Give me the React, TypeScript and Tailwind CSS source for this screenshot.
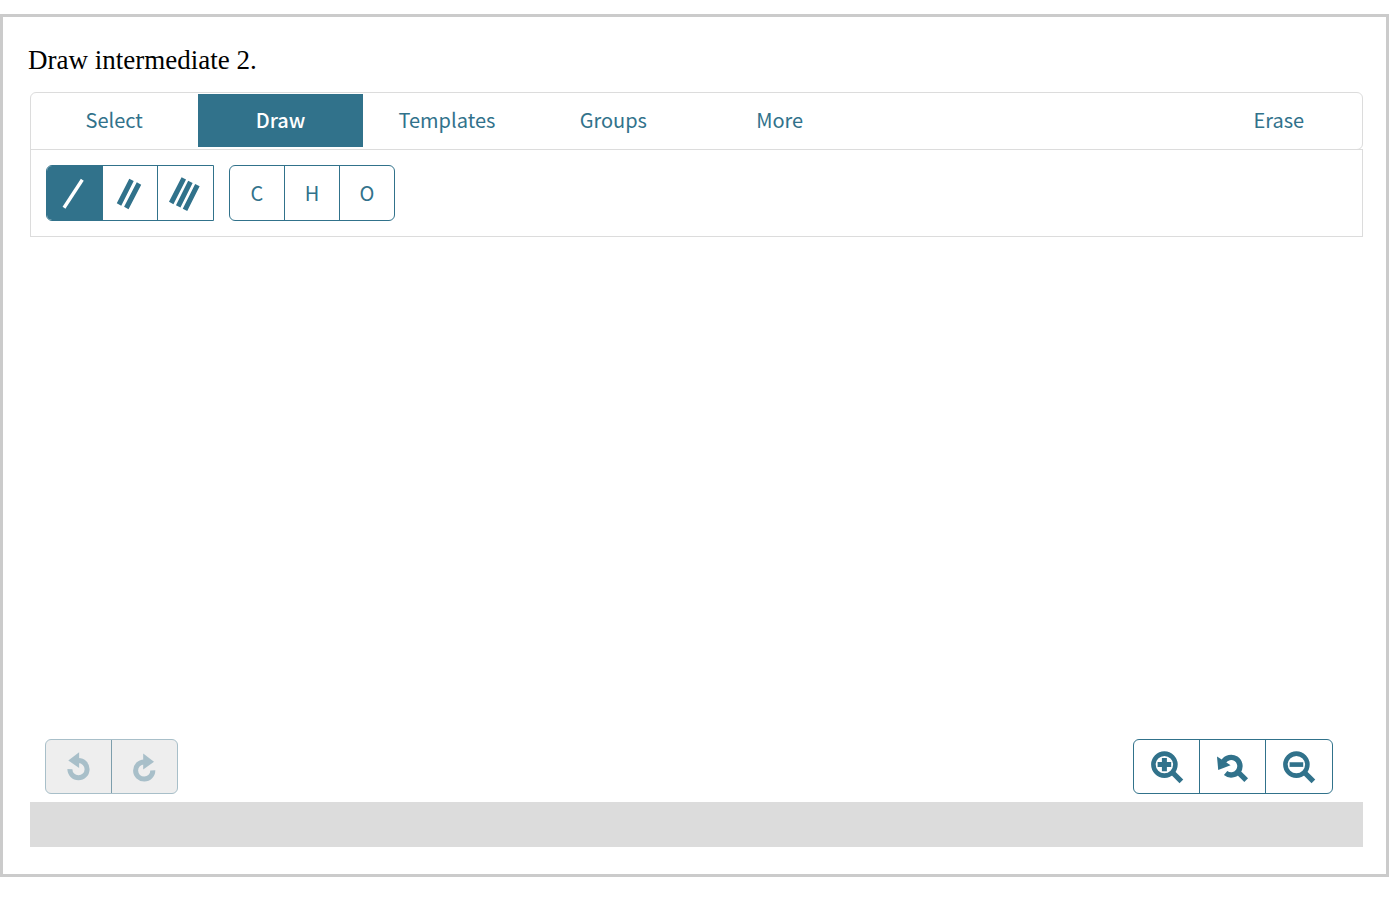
import { useState } from "react";
import type { ReactNode } from "react";
import clsx from "clsx";

const TABS = ["Select", "Draw", "Templates", "Groups", "More", "Erase"];
const ELEMENTS = ["C", "H", "O"];

type Bond = { name: string; width: number; d: string };

const BONDS: Bond[] = [
  { name: "Single bond", width: 3.4, d: "M10 34.7 28.3 6.7" },
  { name: "Double bond", width: 5, d: "M9 31.5 21.5 6.8M16.3 35 29 10.5" },
  { name: "Triple bond", width: 5, d: "M5.2 30 17.8 5.4M12.2 33.4 24.4 8.8M19 36.8 31.4 12.2" },
];

function Icon({ children }: { children: ReactNode }) {
  return (
    <svg className="size-10 shrink-0" viewBox="0 0 40 40" fill="none" stroke="currentColor" aria-hidden="true">
      {children}
    </svg>
  );
}

function UndoIcon() {
  return (
    <Icon>
      <path d="M10.9 22.1A8.6 8.6 0 1 0 19.5 13.6" strokeWidth="5" />
      <path d="M9.3 13.5 20.1 5.3V20.9Z" fill="currentColor" stroke="none" />
    </Icon>
  );
}

function RedoIcon() {
  return (
    <Icon>
      <path d="M27.8 23.4A8.6 8.6 0 1 1 19 14.9" strokeWidth="5" />
      <path d="M29 14.8 18.2 6.6V22.6Z" fill="currentColor" stroke="none" />
    </Icon>
  );
}

function ZoomInIcon() {
  return (
    <Icon>
      <circle cx="17.4" cy="17.6" r="11" strokeWidth="4.6" />
      <path d="M25 25 34.4 34.4" strokeWidth="5.2" />
      <path d="M10.6 17.6H24.2M17.4 11V24.2" strokeWidth="5" />
    </Icon>
  );
}

function ZoomResetIcon() {
  return (
    <Icon>
      <path d="M10.6 14.6A8.8 8.8 0 1 1 12.6 26" strokeWidth="5.4" />
      <path d="M23.8 23.8 33.2 33.2" strokeWidth="5.2" />
      <path d="M4 9.4 17.6 18.2 5.2 23Z" fill="currentColor" stroke="none" />
    </Icon>
  );
}

function ZoomOutIcon() {
  return (
    <Icon>
      <circle cx="17.4" cy="17.6" r="11" strokeWidth="4.6" />
      <path d="M25 25 34.4 34.4" strokeWidth="5.2" />
      <path d="M10.6 17.6H24.2" strokeWidth="4.6" />
    </Icon>
  );
}

export default function App() {
  const [tab, setTab] = useState("Draw");
  const [tool, setTool] = useState("Single bond");

  return (
    <main className="mt-[14px] mr-[11px] border-3 border-[#cbcbcb] bg-white pt-[27px] pr-[23px] pb-[27px] pl-[27px] font-['Noto_Sans_CJK_SC',sans-serif] text-[#31728b]">
      <h1 className="-ml-0.5 font-['Liberation_Serif',serif] text-[27px] leading-8 text-black">
        Draw intermediate 2.
      </h1>

      <nav className="mt-4 grid h-[58px] grid-cols-8 rounded-md rounded-bl-none border border-[#dcdcdc] pt-px pb-[2px]" aria-label="Drawing modes">
        {TABS.map((name) => (
          <button
            key={name}
            type="button"
            aria-pressed={tab === name}
            onClick={() => setTab(name)}
            className={clsx(
              "mx-px pb-0.5 text-[20px] leading-6",
              name === "Erase" && "col-start-8",
              tab === name ? "bg-[#31728b] font-medium text-white" : "font-normal",
            )}
          >
            {name}
          </button>
        ))}
      </nav>

      <div className="-mt-px flex gap-[15px] border border-[#dcdcdc] p-[15px]">
        <div className="flex h-14 w-[168px] divide-x divide-[#31728b] overflow-hidden rounded-l-md border border-[#31728b]" role="group" aria-label="Bonds">
          {BONDS.map((bond) => (
            <button
              key={bond.name}
              type="button"
              aria-label={bond.name}
              aria-pressed={tool === bond.name}
              onClick={() => setTool(bond.name)}
              className={clsx("flex flex-1 items-center justify-center", tool === bond.name && "bg-[#31728b] text-white")}
            >
              <Icon>
                <path d={bond.d} strokeWidth={bond.width} />
              </Icon>
            </button>
          ))}
        </div>
        <div className="flex h-14 w-[166px] divide-x divide-[#31728b] overflow-hidden rounded-md border border-[#31728b]" role="group" aria-label="Elements">
          {ELEMENTS.map((symbol) => (
            <button
              key={symbol}
              type="button"
              aria-pressed={tool === symbol}
              onClick={() => setTool(symbol)}
              className={clsx("flex-1 text-[20px] leading-6", tool === symbol && "bg-[#31728b] text-white")}
            >
              {symbol}
            </button>
          ))}
        </div>
      </div>

      <section className="flex h-[565px] items-end justify-between pr-[30px] pb-2 pl-[15px]" aria-label="Canvas">
        <div className="flex h-[55px] divide-x divide-[#7d9eac] overflow-hidden rounded-md border border-[#a8bfc9] bg-[#eeeeee] text-[#a8bfc9]">
          <button type="button" disabled aria-label="Undo" className="flex w-[66px] items-center justify-center">
            <UndoIcon />
          </button>
          <button type="button" disabled aria-label="Redo" className="flex w-[65px] items-center justify-center">
            <RedoIcon />
          </button>
        </div>
        <div className="flex h-[55px] divide-x divide-[#31728b] overflow-hidden rounded-md border border-[#31728b]">
          <button type="button" aria-label="Zoom in" className="flex w-[66px] items-center justify-center">
            <ZoomInIcon />
          </button>
          <button type="button" aria-label="Reset zoom" className="flex w-[66px] items-center justify-center">
            <ZoomResetIcon />
          </button>
          <button type="button" aria-label="Zoom out" className="flex w-[66px] items-center justify-center">
            <ZoomOutIcon />
          </button>
        </div>
      </section>

      <footer className="h-[45px] bg-[#dcdcdc]" />
    </main>
  );
}
